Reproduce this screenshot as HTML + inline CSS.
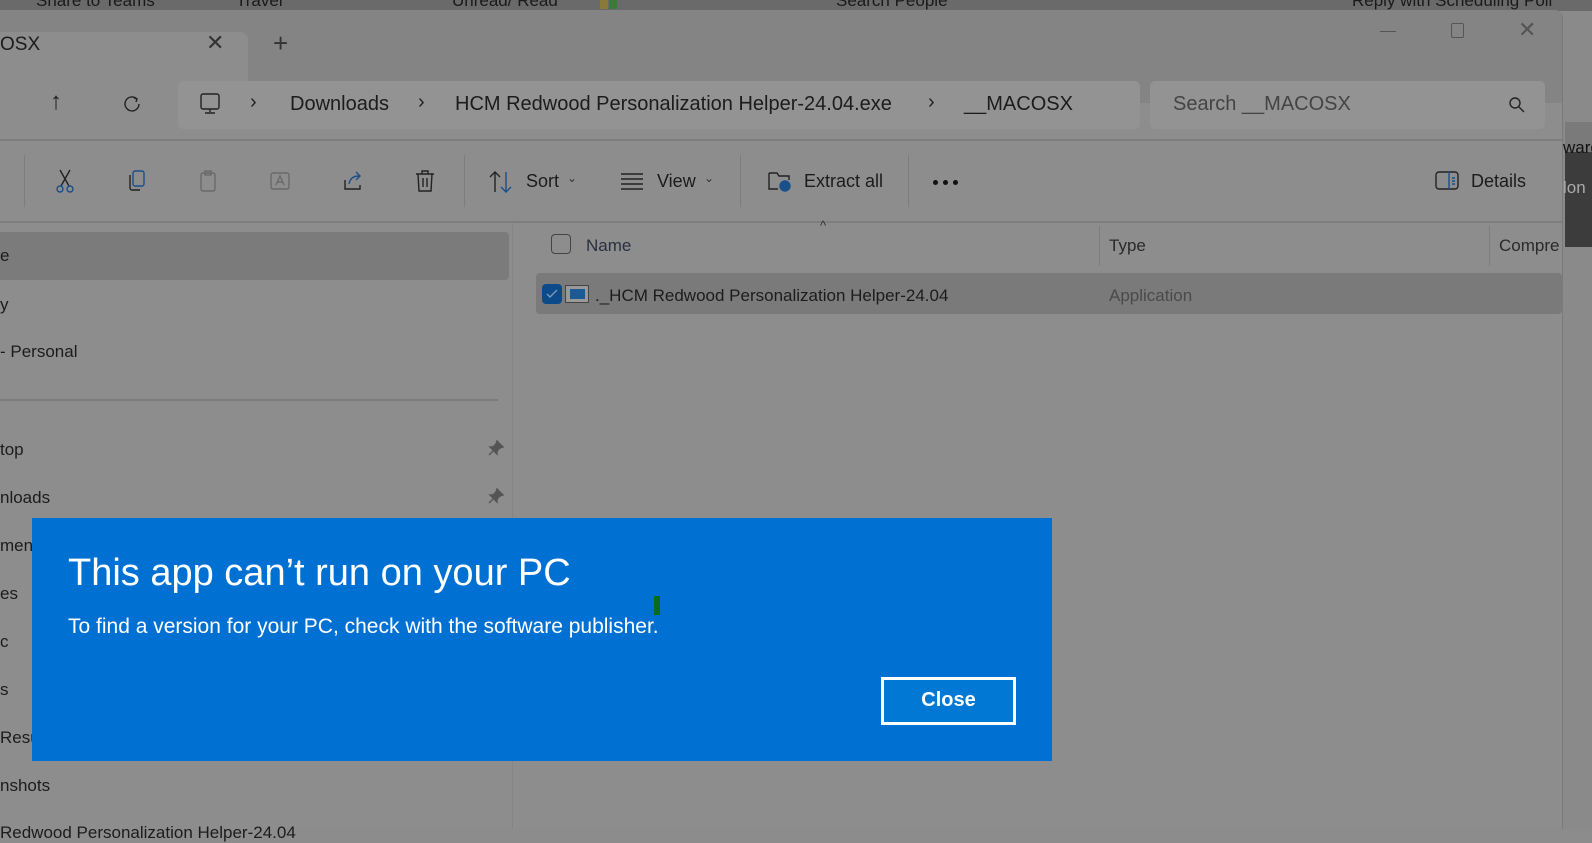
<!DOCTYPE html>
<html><head><meta charset="utf-8"><style>
*{margin:0;padding:0;box-sizing:border-box}
body{width:1592px;height:829px;overflow:hidden;background:#8c8c8c;font-family:"Liberation Sans",sans-serif;color:#1c1c1c;position:relative}
.a{position:absolute}
.t{position:absolute;white-space:nowrap}
svg{position:absolute;fill:none;stroke:#222;stroke-width:1.4}
</style></head><body>
<div class="a" style="left:0;top:0;width:1592px;height:11px;background:#6a6a6a"></div>
<div class="t" style="left:36px;top:-9px;font-size:17px;color:#1a1a1a">Share to Teams</div>
<div class="t" style="left:236px;top:-9px;font-size:17px;color:#1a1a1a">Travel</div>
<div class="t" style="left:452px;top:-9px;font-size:17px;color:#1a1a1a">Unread/ Read</div>
<div class="t" style="left:836px;top:-9px;font-size:17px;color:#1a1a1a">Search People</div>
<div class="t" style="left:1352px;top:-9px;font-size:17px;color:#1a1a1a">Reply with Scheduling Poll</div>
<div class="a" style="left:600px;top:0;width:8px;height:9px;background:#8a7a3a"></div>
<div class="a" style="left:609px;top:0;width:8px;height:9px;background:#3b7a3b"></div>
<div class="a" style="left:1562px;top:11px;width:30px;height:818px;background:#8a8a8a"></div>
<div class="a" style="left:1565px;top:122px;width:27px;height:125px;background:#3c3c3c"></div>
<div class="a" style="left:1565px;top:122px;width:27px;height:30px;background:#7a7a7a"></div>
<div class="t" style="left:1563px;top:138px;font-size:17px;color:#111">ward</div>
<div class="t" style="left:1563px;top:178px;font-size:17px;color:#aaa">lon</div>
<div class="a" style="left:0;top:10px;width:1563px;height:819px;background:#8d8d8d;border-top-right-radius:8px;border-right:1px solid #7a7a7a"></div>
<div class="a" style="left:0;top:10px;width:1562px;height:93px;background:#848484;border-top-right-radius:8px"></div>
<div class="a" style="left:0;top:32px;width:248px;height:72px;background:#8d8d8d;border-top-right-radius:8px"></div>
<div class="t" style="left:0;top:34px;font-size:19px">OSX</div>
<div class="t" style="left:206px;top:30px;font-size:22px;color:#333">✕</div>
<div class="t" style="left:273px;top:28px;font-size:26px;color:#333">+</div>
<div class="a" style="left:1380px;top:31px;width:16px;height:1px;background:#555"></div>
<div class="a" style="left:1451px;top:23px;width:13px;height:15px;border:1.5px solid #555;border-radius:2px"></div>
<div class="t" style="left:1518px;top:17px;font-size:22px;color:#555">✕</div>
<div class="t" style="left:50px;top:88px;font-size:24px;color:#222">↑</div>
<svg style="left:121px;top:93px" width="22" height="22" viewBox="0 0 22 22"><path d="M16 6A7 7 0 1 0 18 11"/><path d="M13 5l3 1 -1 3"/></svg>
<div class="a" style="left:178px;top:81px;width:962px;height:48px;background:#939393;border-radius:5px"></div>
<svg style="left:198px;top:92px" width="24" height="24" viewBox="0 0 24 24"><rect x="3" y="2" width="18" height="15" rx="2"/><path d="M12 17v3M7 21h10"/></svg>
<div class="t" style="left:250px;top:91px;font-size:20px;color:#222">›</div>
<div class="t" style="left:290px;top:93px;font-size:20px">Downloads</div>
<div class="t" style="left:418px;top:91px;font-size:20px;color:#222">›</div>
<div class="t" style="left:455px;top:93px;font-size:20px">HCM Redwood Personalization Helper-24.04.exe</div>
<div class="t" style="left:928px;top:91px;font-size:20px;color:#222">›</div>
<div class="t" style="left:964px;top:93px;font-size:20px">__MACOSX</div>
<div class="a" style="left:1150px;top:81px;width:395px;height:48px;background:#939393;border-radius:5px"></div>
<div class="t" style="left:1173px;top:93px;font-size:20px;color:#444">Search __MACOSX</div>
<svg style="left:1508px;top:96px" width="18" height="18" viewBox="0 0 18 18"><circle cx="7" cy="7" r="5"/><path d="M11 11l5 5"/></svg>
<div class="a" style="left:0;top:139px;width:1562px;height:2px;background:#7e7e7e"></div>
<div class="a" style="left:24px;top:155px;width:1px;height:52px;background:#7d7d7d"></div>
<svg style="left:52px;top:168px" width="26" height="26" viewBox="0 0 26 26"><path d="M8 2l9 16M18 2l-9 16"/><circle cx="8" cy="21" r="3" stroke="#1a4f8a"/><circle cx="18" cy="21" r="3" stroke="#1a4f8a"/></svg>
<svg style="left:124px;top:168px" width="26" height="26" viewBox="0 0 26 26"><rect x="9" y="3" width="11" height="15" rx="2" stroke="#1a4f8a"/><path d="M6 7v13a2 2 0 0 0 2 2h8"/></svg>
<svg style="left:196px;top:168px" width="26" height="26" viewBox="0 0 26 26"><rect x="5" y="5" width="14" height="18" rx="2" stroke="#6a6a6a"/><rect x="9" y="3" width="6" height="4" stroke="#6a6a6a"/></svg>
<svg style="left:268px;top:168px" width="26" height="26" viewBox="0 0 26 26"><rect x="3" y="5" width="18" height="16" rx="2" stroke="#6a6a6a"/><path d="M8 17l4-9 4 9M9.5 14h5" stroke="#6a6a6a"/></svg>
<svg style="left:340px;top:168px" width="26" height="26" viewBox="0 0 26 26"><path d="M5 12v9h15v-4"/><path d="M9 16c1-6 5-8 10-8M16 4l4 4-4 4" stroke="#1a4f8a"/></svg>
<svg style="left:412px;top:168px" width="26" height="26" viewBox="0 0 26 26"><path d="M4 6h18M10 6V3h6v3M6 6l1 17h12l1-17M11 10v9M15 10v9"/></svg>
<div class="a" style="left:464px;top:155px;width:1px;height:52px;background:#7d7d7d"></div>
<svg style="left:488px;top:170px" width="26" height="24" viewBox="0 0 26 24"><path d="M7 22V2M2 7l5-5 5 5"/><path d="M18 2v20M13 17l5 5 5-5" stroke="#1a4f8a"/></svg>
<div class="t" style="left:526px;top:171px;font-size:18px">Sort</div>
<div class="t" style="left:567px;top:171px;font-size:12px;color:#333">⌄</div>
<svg style="left:620px;top:172px" width="24" height="18" viewBox="0 0 24 18"><path d="M1 2h22M1 7h22M1 12h22M1 17h22"/></svg>
<div class="t" style="left:657px;top:171px;font-size:18px">View</div>
<div class="t" style="left:704px;top:171px;font-size:12px;color:#333">⌄</div>
<div class="a" style="left:740px;top:155px;width:1px;height:52px;background:#7d7d7d"></div>
<svg style="left:766px;top:168px" width="28" height="26" viewBox="0 0 28 26"><path d="M3 5h8l2 3h10v4M3 5v16h9"/><circle cx="19" cy="18" r="5" fill="#1a4f8a" stroke="#1a4f8a"/></svg>
<div class="t" style="left:804px;top:171px;font-size:18px">Extract all</div>
<div class="a" style="left:908px;top:155px;width:1px;height:52px;background:#7d7d7d"></div>
<div class="a" style="left:933px;top:180px;width:5px;height:5px;border-radius:50%;background:#111"></div>
<div class="a" style="left:943px;top:180px;width:5px;height:5px;border-radius:50%;background:#111"></div>
<div class="a" style="left:953px;top:180px;width:5px;height:5px;border-radius:50%;background:#111"></div>
<svg style="left:1434px;top:170px" width="26" height="22" viewBox="0 0 26 22"><rect x="2" y="2" width="22" height="17" rx="3"/><path d="M15 2v17M18 8h3M18 11h3M18 14h3" stroke="#1a4f8a"/></svg>
<div class="t" style="left:1471px;top:171px;font-size:18px">Details</div>
<div class="a" style="left:0;top:221px;width:1562px;height:2px;background:#7e7e7e"></div>
<div class="a" style="left:0;top:232px;width:509px;height:48px;background:#7b7b7b;border-radius:0 4px 4px 0"></div>
<div class="t" style="left:0;top:246px;font-size:17px">e</div>
<div class="t" style="left:0;top:295px;font-size:17px">y</div>
<div class="t" style="left:0;top:342px;font-size:17px">- Personal</div>
<div class="a" style="left:0;top:399px;width:498px;height:2px;background:#7c7c7c"></div>
<div class="t" style="left:0;top:440px;font-size:17px">top</div>
<div class="t" style="left:0;top:488px;font-size:17px">nloads</div>
<div class="t" style="left:0;top:536px;font-size:17px">men</div>
<div class="t" style="left:0;top:584px;font-size:17px">es</div>
<div class="t" style="left:0;top:632px;font-size:17px">c</div>
<div class="t" style="left:0;top:680px;font-size:17px">s</div>
<div class="t" style="left:0;top:728px;font-size:17px">Resur</div>
<div class="t" style="left:0;top:776px;font-size:17px">nshots</div>
<div class="t" style="left:0;top:823px;font-size:17px">Redwood Personalization Helper-24.04</div>
<svg style="left:488px;top:440px" width="16" height="16" viewBox="0 0 16 16"><path d="M9 1l6 6-3 1-3 3 0 3-7-7 3 0 3-3z M5 11l-4 4" fill="#555" stroke="#555"/></svg>
<svg style="left:488px;top:488px" width="16" height="16" viewBox="0 0 16 16"><path d="M9 1l6 6-3 1-3 3 0 3-7-7 3 0 3-3z M5 11l-4 4" fill="#555" stroke="#555"/></svg>
<div class="a" style="left:512px;top:223px;width:1px;height:606px;background:#858585"></div>
<div class="t" style="left:820px;top:218px;font-size:13px;color:#333">^</div>
<div class="a" style="left:551px;top:234px;width:20px;height:20px;border:1.5px solid #444;border-radius:4px"></div>
<div class="t" style="left:586px;top:236px;font-size:17px;color:#2a2f40">Name</div>
<div class="a" style="left:1099px;top:226px;width:1px;height:40px;background:#7d7d7d"></div>
<div class="t" style="left:1109px;top:236px;font-size:17px;color:#2a2a2a">Type</div>
<div class="a" style="left:1489px;top:226px;width:1px;height:40px;background:#7d7d7d"></div>
<div class="t" style="left:1499px;top:236px;font-size:17px;color:#2a2a2a">Compre</div>
<div class="a" style="left:536px;top:273px;width:1026px;height:41px;background:#7a7a7a;border-radius:4px"></div>
<div class="a" style="left:542px;top:284px;width:20px;height:20px;background:#0d4a8a;border-radius:4px"></div>
<svg style="left:545px;top:288px" width="14" height="12" viewBox="0 0 14 12"><path d="M2 6l3 3 7-7" stroke="#7a9ab8"/></svg>
<div class="a" style="left:565px;top:285px;width:24px;height:18px;border:1.5px solid #444;background:#999"><div class="a" style="left:4px;top:3px;width:15px;height:10px;background:#1a5a95"></div></div>
<div class="t" style="left:595px;top:286px;font-size:17px">._HCM Redwood Personalization Helper-24.04</div>
<div class="t" style="left:1109px;top:286px;font-size:17px;color:#4a4a4a">Application</div>
<div class="a" style="left:32px;top:518px;width:1020px;height:243px;background:#0071d3"></div>
<div class="t" style="left:68px;top:552px;font-size:38px;color:#fff">This app can’t run on your PC</div>
<div class="t" style="left:68px;top:615px;font-size:21px;color:#fff">To find a version for your PC, check with the software publisher.</div>
<div class="a" style="left:654px;top:596px;width:6px;height:19px;background:#0b6a1e"></div>
<div class="a" style="left:881px;top:677px;width:135px;height:48px;border:3px solid #fff;background:#0078d4"></div>
<div class="t" style="left:881px;top:689px;width:135px;text-align:center;font-size:20px;font-weight:bold;color:#fff">Close</div>
</body></html>
